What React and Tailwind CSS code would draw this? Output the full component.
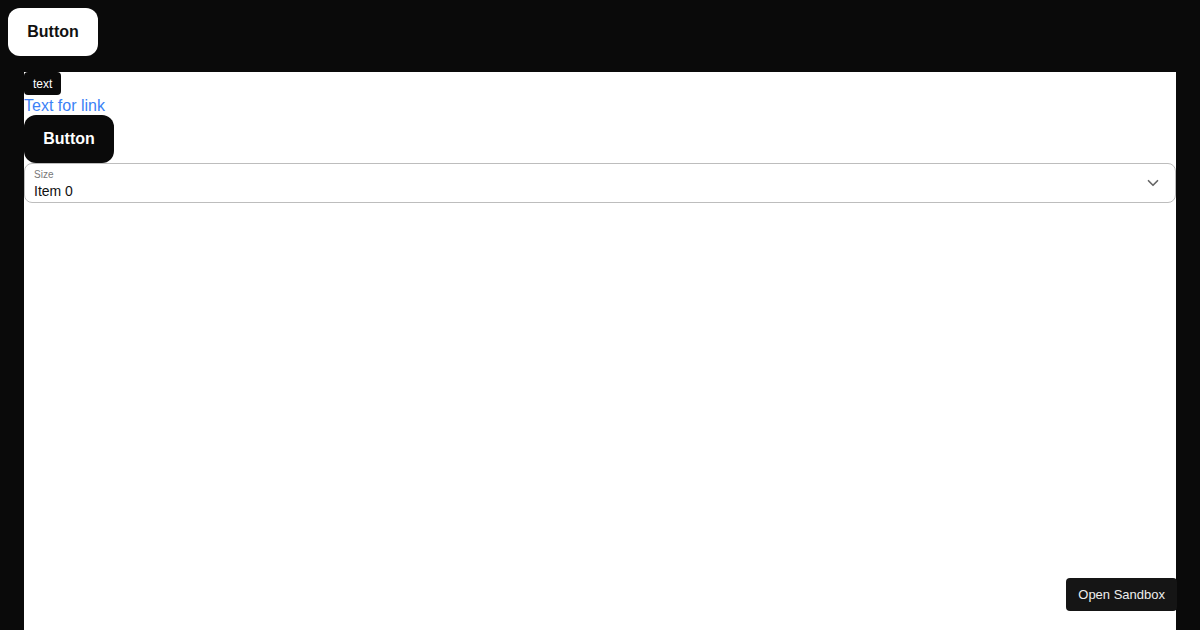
import { ChevronDown } from 'lucide-react'

export default function App() {
  return (
    <div className="min-h-screen bg-[#0a0a0a] p-2 font-['Liberation_Sans',Arial,sans-serif]">
      <button className="block h-12 w-[90px] rounded-xl bg-white text-base font-bold text-[#111]">
        Button
      </button>

      <div className="mx-4 mt-4 min-h-[560px] bg-white">
        <div className="flex h-[23px] w-fit items-center rounded bg-[#0a0a0a] px-[9px] text-xs text-white">
          text
        </div>
        <a href="#" className="block h-5 pt-px text-base leading-[19px] text-[#3b82f6]">
          Text for link
        </a>
        <button className="block h-12 w-[90px] rounded-xl bg-[#0a0a0a] text-base font-bold text-white">
          Button
        </button>
        <div className="flex h-10 items-center justify-between rounded-lg border border-[#bdbdbd] px-[9px]">
          <div className="flex flex-col pt-px">
            <span className="text-[10px] leading-3 text-[#777]">Size</span>
            <span className="mt-[2px] text-sm leading-4 text-[#111]">Item 0</span>
          </div>
          <ChevronDown className="mr-[4px] h-[18px] w-[18px] text-[#666]" strokeWidth={2.25} />
        </div>
      </div>

      <button className="fixed bottom-[19px] right-[23px] h-[33px] rounded bg-[#151515] px-3 text-[13px] text-[#eee]">
        Open Sandbox
      </button>
    </div>
  )
}
